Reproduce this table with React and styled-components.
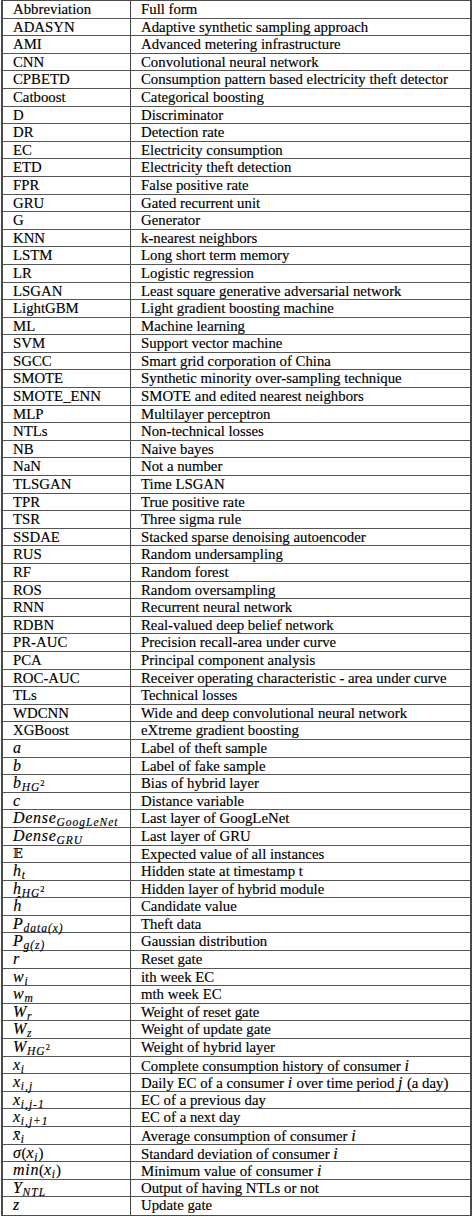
import React from 'react';
import styled, { createGlobalStyle } from 'styled-components';

const GlobalStyle = createGlobalStyle`
  html, body {
    margin: 0;
    padding: 0;
    background: #ffffff;
  }
  body {
    font-family: "Liberation Serif", "Times New Roman", serif;
    color: #000000;
  }
`;

const Table = styled.div`
  width: 471px;
  margin-left: 1px;
  border: 2px solid #4a4a4a;
  border-top-width: 1.5px;
  border-bottom-width: 1.5px;
  box-sizing: border-box;
  background: #ffffff;
`;

const Row = styled.div`
  display: grid;
  grid-template-columns: 128px 1fr;
  height: 17.6px;
  box-sizing: border-box;
  border-bottom: 1px solid #555555;

  &:last-child {
    border-bottom: none;
  }
`;

const Cell = styled.div`
  font-size: 14.8px;
  line-height: ${props => (props.math ? '15px' : '17px')};
  padding-left: 10px;
  border-right: ${props => (props.first ? '1px solid #444444' : 'none')};
  white-space: nowrap;
  -webkit-text-stroke: 0.15px #000;
`;

const Var = styled.span`
  font-style: italic;
  font-family: "Liberation Serif", "DejaVu Serif", serif;
  font-size: 16px;
  letter-spacing: 0.7px;
`;

const Sub = styled.sub`
  font-size: 11.5px;
  font-style: italic;
  vertical-align: -3px;
  line-height: 0;
  letter-spacing: 1px;
`;

const Sup = styled.sup`
  font-size: 8.5px;
  font-style: normal;
  vertical-align: 5px;
  line-height: 0;
`;

const Bb = styled.span`
  font-family: "DejaVu Serif", "DejaVu Sans", serif;
  font-size: 13px;
`;

const HG2 = () => (
  <Sub>
    HG<Sup>2</Sup>
  </Sub>
);

const rows = [
  ['Abbreviation', 'Full form'],
  ['ADASYN', 'Adaptive synthetic sampling approach'],
  ['AMI', 'Advanced metering infrastructure'],
  ['CNN', 'Convolutional neural network'],
  ['CPBETD', 'Consumption pattern based electricity theft detector'],
  ['Catboost', 'Categorical boosting'],
  ['D', 'Discriminator'],
  ['DR', 'Detection rate'],
  ['EC', 'Electricity consumption'],
  ['ETD', 'Electricity theft detection'],
  ['FPR', 'False positive rate'],
  ['GRU', 'Gated recurrent unit'],
  ['G', 'Generator'],
  ['KNN', 'k-nearest neighbors'],
  ['LSTM', 'Long short term memory'],
  ['LR', 'Logistic regression'],
  ['LSGAN', 'Least square generative adversarial network'],
  ['LightGBM', 'Light gradient boosting machine'],
  ['ML', 'Machine learning'],
  ['SVM', 'Support vector machine'],
  ['SGCC', 'Smart grid corporation of China'],
  ['SMOTE', 'Synthetic minority over-sampling technique'],
  ['SMOTE_ENN', 'SMOTE and edited nearest neighbors'],
  ['MLP', 'Multilayer perceptron'],
  ['NTLs', 'Non-technical losses'],
  ['NB', 'Naive bayes'],
  ['NaN', 'Not a number'],
  ['TLSGAN', 'Time LSGAN'],
  ['TPR', 'True positive rate'],
  ['TSR', 'Three sigma rule'],
  ['SSDAE', 'Stacked sparse denoising autoencoder'],
  ['RUS', 'Random undersampling'],
  ['RF', 'Random forest'],
  ['ROS', 'Random oversampling'],
  ['RNN', 'Recurrent neural network'],
  ['RDBN', 'Real-valued deep belief network'],
  ['PR-AUC', 'Precision recall-area under curve'],
  ['PCA', 'Principal component analysis'],
  ['ROC-AUC', 'Receiver operating characteristic - area under curve'],
  ['TLs', 'Technical losses'],
  ['WDCNN', 'Wide and deep convolutional neural network'],
  ['XGBoost', 'eXtreme gradient boosting'],
  [<Var>a</Var>, 'Label of theft sample'],
  [<Var>b</Var>, 'Label of fake sample'],
  [<Var>b<HG2 /></Var>, 'Bias of hybrid layer'],
  [<Var>c</Var>, 'Distance variable'],
  [<Var>Dense<Sub>GoogLeNet</Sub></Var>, 'Last layer of GoogLeNet'],
  [<Var>Dense<Sub>GRU</Sub></Var>, 'Last layer of GRU'],
  [<Bb>𝔼</Bb>, 'Expected value of all instances'],
  [<Var>h<Sub>t</Sub></Var>, 'Hidden state at timestamp t'],
  [<Var>h<HG2 /></Var>, 'Hidden layer of hybrid module'],
  [<Var>ĥ</Var>, 'Candidate value'],
  [<Var>P<Sub>data(x)</Sub></Var>, 'Theft data'],
  [<Var>P<Sub>g(z)</Sub></Var>, 'Gaussian distribution'],
  [<Var>r</Var>, 'Reset gate'],
  [<Var>w<Sub>i</Sub></Var>, 'ith week EC'],
  [<Var>w<Sub>m</Sub></Var>, 'mth week EC'],
  [<Var>W<Sub>r</Sub></Var>, 'Weight of reset gate'],
  [<Var>W<Sub>z</Sub></Var>, 'Weight of update gate'],
  [<Var>W<HG2 /></Var>, 'Weight of hybrid layer'],
  [<Var>x<Sub>i</Sub></Var>, <>Complete consumption history of consumer <Var>i</Var></>],
  [<Var>x<Sub>i,j</Sub></Var>, <>Daily EC of a consumer <Var>i</Var> over time period <Var>j</Var> (a day)</>],
  [<Var>x<Sub>i,j-1</Sub></Var>, 'EC of a previous day'],
  [<Var>x<Sub>i,j+1</Sub></Var>, 'EC of a next day'],
  [<Var>x̄<Sub>i</Sub></Var>, <>Average consumption of consumer <Var>i</Var></>],
  [<><Var>σ</Var>(<Var>x<Sub>i</Sub></Var>)</>, <>Standard deviation of consumer <Var>i</Var></>],
  [<><Var>min</Var>(<Var>x<Sub>i</Sub></Var>)</>, <>Minimum value of consumer <Var>i</Var></>],
  [<Var>Y<Sub>NTL</Sub></Var>, 'Output of having NTLs or not'],
  [<Var>z</Var>, 'Update gate'],
];

export default function App() {
  return (
    <>
      <GlobalStyle />
      <Table>
        {rows.map((r, i) => (
          <Row key={i}>
            <Cell first math={typeof r[0] !== 'string'}>{r[0]}</Cell>
            <Cell>{r[1]}</Cell>
          </Row>
        ))}
      </Table>
    </>
  );
}
